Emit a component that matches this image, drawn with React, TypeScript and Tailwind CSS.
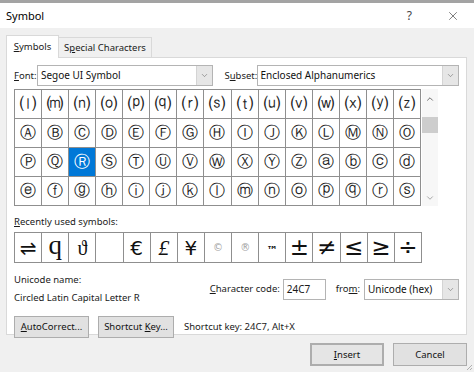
import React from 'react';
import { ChevronDown, ChevronUp, X } from 'lucide-react';

const rows: number[][] = [
  Array.from({ length: 15 }, (_, i) => 0x24a7 + i),
  Array.from({ length: 15 }, (_, i) => 0x24b6 + i),
  Array.from({ length: 15 }, (_, i) => 0x24c5 + i),
  Array.from({ length: 15 }, (_, i) => 0x24d4 + i),
];

const recent = [
  { ch: '\u21cc', cls: 'text-[20px]' },
  { ch: 'q', cls: "text-[27px] font-['Liberation_Serif'] pb-[5px]" },
  { ch: '\u03d1', cls: "text-[20px] font-['Liberation_Serif']" },
  { ch: '', cls: '' },
  { ch: '\u20ac', cls: 'text-[20px]' },
  { ch: '\u00a3', cls: "text-[22px] italic font-['Liberation_Serif']" },
  { ch: '\u00a5', cls: 'text-[20px]' },
  { ch: '\u00a9', cls: 'text-[10px] text-[#a0a0a0]' },
  { ch: '\u00ae', cls: 'text-[10px] text-[#a0a0a0]' },
  { ch: '\u2122', cls: 'text-[11px] font-bold self-start pt-[5px]' },
  { ch: '\u00b1', cls: 'text-[23px]' },
  { ch: '\u2260', cls: 'text-[23px]' },
  { ch: '\u2264', cls: 'text-[23px]' },
  { ch: '\u2265', cls: 'text-[23px]' },
  { ch: '\u00f7', cls: 'text-[23px]' },
];

const Select = ({ value, className }: { value: string; className: string }) => (
  <div className={`flex items-stretch h-[21px] border border-[#b4b4b4] bg-white ${className}`}>
    <span className="flex-1 pl-[3px] leading-[19px] text-[10px] text-[#111] whitespace-nowrap">{value}</span>
    <span className="w-[16px] flex items-center justify-center bg-[#e6e6e6] border-l border-[#d4d4d4]">
      <ChevronDown size={9} strokeWidth={1.5} className="text-[#666]" />
    </span>
  </div>
);

const Button = ({ children, className = '' }: { children: React.ReactNode; className?: string }) => (
  <div className={`flex items-center justify-center h-[22px] bg-[#e1e1e1] border border-[#adadad] text-[#111] whitespace-nowrap ${className}`}>
    {children}
  </div>
);

export default function App() {
  return (
    <div className="relative w-[474px] h-[372px] overflow-hidden bg-[#f0f0f0] text-[9.5px] text-[#1a1a1a] font-['Noto_Sans',sans-serif] leading-none">
      <div className="h-[3px] bg-[#a3a3a3]" />
      <div className="h-[25px] bg-white flex items-center pl-[6px]">
        <span className="text-[11px] text-black">Symbol</span>
        <span className="ml-auto text-[12px] text-[#444] mr-[34px]">?</span>
        <X size={14} strokeWidth={1} className="text-[#222] mr-[14px]" />
      </div>

      <div className="flex items-end pl-[6px] h-[29px]">
        <div className="h-[23px] w-[53px] bg-white border border-b-0 border-[#d9d9d9] flex items-center justify-center relative z-10 -mb-px whitespace-nowrap">
          <span><u>S</u>ymbols</span>
        </div>
        <div className="h-[20px] w-[93px] border border-b-0 border-l-0 border-[#d9d9d9] flex items-center justify-center whitespace-nowrap">
          <span>S<u>p</u>ecial Characters</span>
        </div>
      </div>

      <div className="mx-[6px] mr-[7px] h-[278px] bg-white border border-[#d9d9d9] px-[7px] pt-[7px] whitespace-nowrap">
        <div className="flex items-center h-[21px]">
          <span className="w-[23px]"><u>F</u>ont:</span>
          <Select value="Segoe UI Symbol" className="w-[176px]" />
          <span className="ml-[12px] w-[32px]">S<u>u</u>bset:</span>
          <Select value="Enclosed Alphanumerics" className="w-[203px]" />
        </div>

        <div className="flex mt-[3px]">
          <div className="grid grid-cols-15 gap-px bg-[#8f8f8f] p-px w-[407px]">
            {rows.flat().map((c) => (
              <div
                key={c}
                className={`h-[28px] flex items-center justify-center text-[16px] font-['DejaVu_Sans'] ${
                  c === 0x24c7 ? 'bg-[#0078d7] text-white' : 'bg-white text-[#222]'
                }`}
              >
                {String.fromCodePoint(c)}
              </div>
            ))}
          </div>
          <div className="w-[16px] h-[117px] bg-[#f7f7f7] flex flex-col items-center ml-px">
            <ChevronUp size={10} strokeWidth={2} className="text-[#555] mt-[5px]" />
            <div className="w-full h-[16px] bg-[#cdcdcd] mt-[13px]" />
            <ChevronDown size={10} strokeWidth={1.5} className="text-[#777] mt-auto mb-[3px]" />
          </div>
        </div>

        <div className="mt-[11px] h-[12px]"><u>R</u>ecently used symbols:</div>
        <div className="grid grid-cols-15 gap-px bg-[#8f8f8f] p-px w-[408px] mt-[3px]">
          {recent.map((r, i) => (
            <div key={i} className={`h-[29px] bg-white flex items-center justify-center text-[#111] font-['DejaVu_Sans'] ${r.cls}`}>
              {r.ch}
            </div>
          ))}
        </div>

        <div className="flex mt-[9px]">
          <div>
            <div className="h-[16px] leading-[16px]">Unicode name:</div>
            <div className="mt-[2px] h-[16px] leading-[16px]">Circled Latin Capital Letter R</div>
          </div>
          <div className="flex items-center h-[22px] mt-[6px] ml-auto">
            <span className="shrink-0"><u>C</u>haracter code:</span>
            <div className="ml-[3px] w-[43px] h-[21px] border border-[#b4b4b4] bg-white pl-[3px] leading-[19px] text-[10px]">24C7</div>
            <span className="ml-[10px] shrink-0">fro<u>m</u>:</span>
            <Select value="Unicode (hex)" className="ml-[4px] w-[95px]" />
          </div>
        </div>

        <div className="flex items-center mt-[10px]">
          <Button className="w-[75px]"><span><u>A</u>utoCorrect...</span></Button>
          <Button className="w-[76px] ml-[9px]"><span>Shortcut <u>K</u>ey...</span></Button>
          <span className="ml-[10px]">Shortcut key: 24C7, Alt+X</span>
        </div>
      </div>

      <div className="flex justify-end mt-[8px] mr-[7px]">
        <Button className="w-[74px] h-[23px] border-2 border-[#0078d7] bg-[#e5e5e5]"><span><u>I</u>nsert</span></Button>
        <Button className="w-[74px] h-[23px] ml-[9px]">Cancel</Button>
      </div>

      <svg className="absolute right-[1px] bottom-[1px]" width="8" height="8" viewBox="0 0 8 8">
        <path d="M7 2 L2 7 M7 5 L5 7" stroke="#b0b0b0" strokeWidth="1" />
      </svg>
    </div>
  );
}
